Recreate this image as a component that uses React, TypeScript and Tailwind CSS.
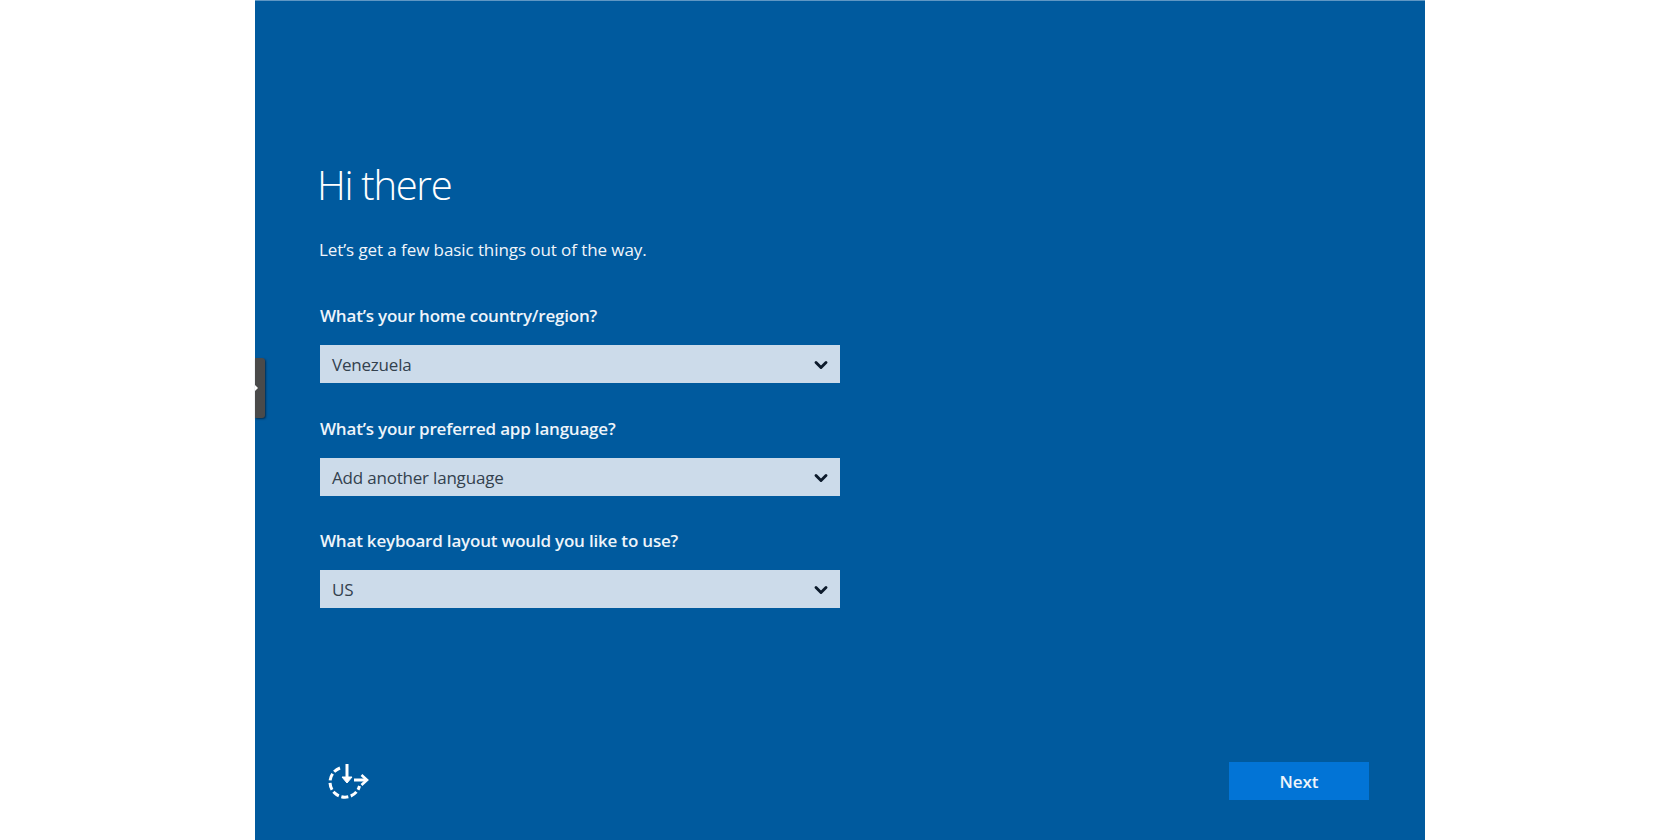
import { ChevronDown } from "lucide-react";

const FONT = { fontFamily: '"Open Sans", "Noto Sans", sans-serif' };

function Field({ label, value }: { label: string; value: string }) {
  return (
    <div className="flex flex-col">
      <label className="h-[26px] text-[17px] leading-[26px] font-semibold text-[#eef4fa] tracking-[-0.2px]">{label}</label>
      <div className="mt-[16px] flex h-[38px] w-[520px] items-center justify-between bg-[#ccdbea] pl-3 pr-[9px] pt-[2px] text-[#33414e]">
        <span className="text-[17px] tracking-[-0.2px]">{value}</span>
        <ChevronDown size={20} strokeWidth={3.5} className="text-[#0c1a2b]" />
      </div>
    </div>
  );
}

function SpeechIcon() {
  return (
    <svg width="42" height="38" viewBox="0 0 42 38" fill="none" stroke="#fff" strokeWidth="3">
      <path d="M12 6 A15 15 0 1 0 31.5 24" strokeDasharray="7 2.5" />
      <path d="M19 2v15" />
      <path d="M14 15h10l-5 6z" fill="#fff" strokeWidth="1" />
      <path d="M26 18h12" />
      <path d="M33.5 13l5.5 5-5.5 5" strokeWidth="2.6" />
    </svg>
  );
}

export default function App() {
  return (
    <div className="min-h-[840px] bg-white" style={FONT}>
      <div className="relative mx-auto flex h-[840px] w-[1170px] flex-col border-t border-[#5f97c4] bg-[#005a9e] pl-[65px] pt-[156px] text-white">
        <div className="absolute left-0 top-[357px] flex h-[60px] w-[10px] items-center rounded-r-[3px] bg-[#4a4a4a] shadow-[1px_1px_2px_#002f55]">
          <div className="h-0 w-0 border-y-[3px] border-l-[3px] border-y-transparent border-l-white" />
        </div>
        <h1 className="h-[56px] -ml-[3px] text-[40px] leading-[56px] font-light tracking-[-1.3px]">Hi there</h1>
        <p className="mt-[24px] h-[26px] -ml-[1px] text-[17px] leading-[26px] tracking-[-0.08px] text-[#f0f5fa]">Let’s get a few basic things out of the way.</p>
        <div className="mt-[40px] flex flex-col gap-[32.5px]">
          <Field label="What’s your home country/region?" value="Venezuela" />
          <Field label="What’s your preferred app language?" value="Add another language" />
          <Field label="What keyboard layout would you like to use?" value="US" />
        </div>
        <div className="mt-[154px] ml-[8px] flex items-center justify-between pr-[56px]">
          <SpeechIcon />
          <button className="flex h-[38px] w-[140px] items-center justify-center bg-[#0274d6] pt-[2px] text-[17px] font-semibold text-[#eef4fa]">Next</button>
        </div>
      </div>
    </div>
  );
}
